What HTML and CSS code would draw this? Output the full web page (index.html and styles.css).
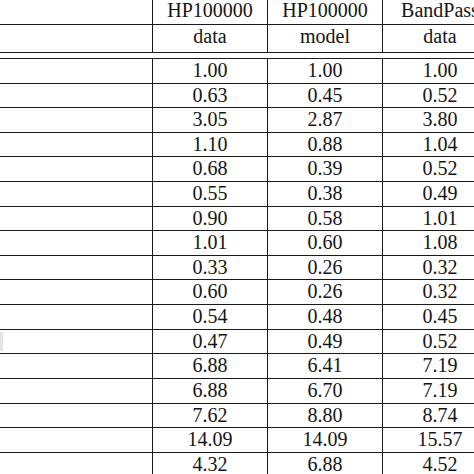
FILE: index.html
```html
<!DOCTYPE html>
<html>
<head>
<meta charset="utf-8">
<link rel="stylesheet" href="styles.css">
</head>
<body>
<div class="table">
  <div class="row head h1"><div class="cell"></div><div class="cell">HP100000</div><div class="cell">HP100000</div><div class="cell">BandPass</div></div>
  <div class="row head h2"><div class="cell"></div><div class="cell">data</div><div class="cell">model</div><div class="cell">data</div></div>
  <div class="sep"></div>
  <div class="row"><div class="cell"></div><div class="cell">1.00</div><div class="cell">1.00</div><div class="cell">1.00</div></div>
  <div class="row"><div class="cell"></div><div class="cell">0.63</div><div class="cell">0.45</div><div class="cell">0.52</div></div>
  <div class="row"><div class="cell"></div><div class="cell">3.05</div><div class="cell">2.87</div><div class="cell">3.80</div></div>
  <div class="row"><div class="cell"></div><div class="cell">1.10</div><div class="cell">0.88</div><div class="cell">1.04</div></div>
  <div class="row"><div class="cell"></div><div class="cell">0.68</div><div class="cell">0.39</div><div class="cell">0.52</div></div>
  <div class="row"><div class="cell"></div><div class="cell">0.55</div><div class="cell">0.38</div><div class="cell">0.49</div></div>
  <div class="row"><div class="cell"></div><div class="cell">0.90</div><div class="cell">0.58</div><div class="cell">1.01</div></div>
  <div class="row"><div class="cell"></div><div class="cell">1.01</div><div class="cell">0.60</div><div class="cell">1.08</div></div>
  <div class="row"><div class="cell"></div><div class="cell">0.33</div><div class="cell">0.26</div><div class="cell">0.32</div></div>
  <div class="row"><div class="cell"></div><div class="cell">0.60</div><div class="cell">0.26</div><div class="cell">0.32</div></div>
  <div class="row"><div class="cell"></div><div class="cell">0.54</div><div class="cell">0.48</div><div class="cell">0.45</div></div>
  <div class="row"><div class="cell left"><span class="mark"></span></div><div class="cell">0.47</div><div class="cell">0.49</div><div class="cell">0.52</div></div>
  <div class="row"><div class="cell"></div><div class="cell">6.88</div><div class="cell">6.41</div><div class="cell">7.19</div></div>
  <div class="row"><div class="cell"></div><div class="cell">6.88</div><div class="cell">6.70</div><div class="cell">7.19</div></div>
  <div class="row"><div class="cell"></div><div class="cell">7.62</div><div class="cell">8.80</div><div class="cell">8.74</div></div>
  <div class="row"><div class="cell"></div><div class="cell">14.09</div><div class="cell">14.09</div><div class="cell">15.57</div></div>
  <div class="row"><div class="cell"></div><div class="cell">4.32</div><div class="cell">6.88</div><div class="cell">4.52</div></div>
</div>
</body>
</html>
```
FILE: styles.css
```css
html, body {
  margin: 0;
  padding: 0;
  overflow: hidden;
  background: #ffffff;
}
body {
  width: 474px;
  height: 474px;
  font-family: "Liberation Serif", "Times New Roman", serif;
  font-size: 20px;
  color: #151515;
}
* { box-sizing: border-box; }
.table {
  width: 498px;
}
.row {
  display: grid;
  grid-template-columns: 153px 115px 115px 115px;
  height: 24.62px;
  border-bottom: 1px solid #1a1a1a;
  line-height: 23px;
}
.row.h1 {
  height: 25px;
  line-height: 20px;
}
.row.h2 { height: 28px; }
.cell {
  border-right: 1px solid #1a1a1a;
  text-align: center;
  white-space: nowrap;
  overflow: hidden;
}
.cell.left { text-align: left; }
.mark {
  display: block;
  width: 3px;
  height: 19px;
  margin-top: 2px;
  background: #e4e4e4;
}
.sep {
  height: 6px;
  border-bottom: 1px solid #1a1a1a;
}
```
